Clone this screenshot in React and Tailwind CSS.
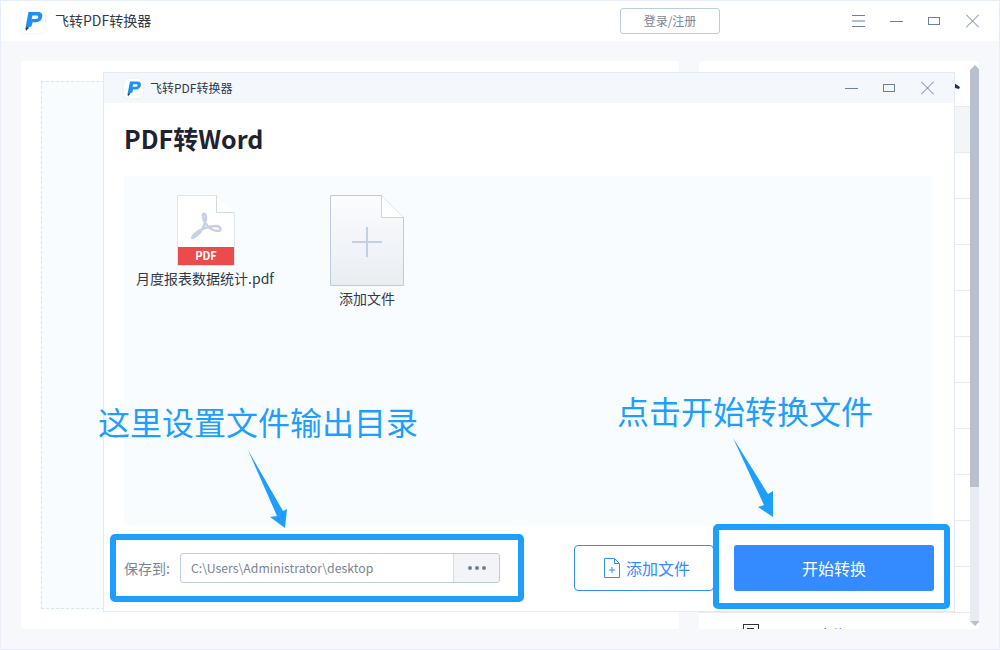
const font = { fontFamily: '"Noto Sans CJK SC", "Noto Sans", sans-serif' }

function Logo({ size }) {
  return (
    <div className="flex items-center justify-center rounded-[5px] bg-white shadow-[0_0_3px_#e3e9f2]" style={{ width: size, height: size }}>
      <svg viewBox="0 0 24 24" style={{ width: size, height: size }}>
        <path d="M7.500 3h9.500c3 0 4.800 2 4.300 4.800-.5 3.200-3 5.400-6.300 5.400h-3.500l-1 4-4.500 1.800-1.500-.5z" fill="#1c90f5" />
        <path d="M11.500 6.500h4c1.300 0 2 .7 1.800 1.700-.2 1-1.100 1.700-2.400 1.700h-4.300z" fill="#fff" />
        <path d="M4.500 18.800l3-.8-.3 2-1.300.6-.4 1.400-.8-1.300z" fill="#2b3140" />
      </svg>
    </div>
  )
}

function WinControls({ menu }) {
  return (
    <div className="flex items-center">
      {menu && (
        <svg width="13" height="14" viewBox="0 0 13 14" className="mr-[25px]" stroke="#6f7f9f" fill="none">
          <path d="M0 1.500h13M0 7h13M0 12.500h13" />
        </svg>
      )}
      <svg width="13" height="14" viewBox="0 0 13 14" className="mr-[25px]" stroke="#6f7f9f" fill="none">
        <path d="M0 7.500h13" />
      </svg>
      <svg width="12" height="14" viewBox="0 0 12 14" className="mr-[26px]" stroke="#6f7f9f" fill="none">
        <rect x=".5" y="3.500" width="11" height="7" />
      </svg>
      <svg width="13" height="14" viewBox="0 0 13 14" stroke="#6f7f9f" fill="none">
        <path d="M0 .5l13 13M13 .5L0 13.500" />
      </svg>
    </div>
  )
}

function Arrow({ className, width, height, d }) {
  return (
    <svg viewBox={`0 0 ${width} ${height}`} className={`absolute ${className}`} style={{ width, height }}>
      <path d={d} fill="#1e9fff" />
    </svg>
  )
}

export default function App() {
  const rows = [0, 1, 2, 3, 4, 5, 6, 7, 8, 9]

  return (
    <div className="relative flex h-[650px] w-[1000px] flex-col overflow-hidden bg-[#f6f8fb]" style={font}>
      {/* Main title bar */}
      <div className="flex h-[41px] items-center bg-white pl-[21px] pr-[21px]">
        <Logo size={24} />
        <span className="ml-[10px] text-[14px] text-[#333a4a]">飞转PDF转换器</span>
        <button className="ml-auto mr-[132px] flex h-[26px] w-[100px] items-center justify-center rounded-[3px] border border-[#bccbdd] text-[12px] text-[#7b8494]">
          登录/注册
        </button>
        <WinControls menu />
      </div>

      {/* Background panels */}
      <div className="flex gap-5 px-[21px] pt-5">
        <div className="h-[568px] w-[658px] rounded-[3px] bg-white pl-5 pt-5">
          <div className="h-[528px] w-[300px] border border-dashed border-[#cfe6f3] bg-[#f9fcfe]" />
        </div>
        <div className="relative h-[568px] w-[280px] overflow-hidden rounded-[3px] bg-white">
          <div className="mt-[45px] h-[47px] border-y border-[#e6ebf3] bg-[#f3f5f6]" />
          {rows.map((r) => (
            <div key={r} className="h-[46px] border-b border-[#e6ebf3]" />
          ))}
          <svg width="6" height="6" viewBox="0 0 6 6" className="absolute left-[255px] top-[22px]">
            <path d="M0 0l6 4-1 2-4-1z" fill="#2b3140" />
          </svg>
          <div className="absolute left-[44px] top-[563px] h-[16px] w-[16px] border border-[#333]">
            <div className="ml-[3px] mt-[3px] h-px w-[7px] bg-[#333]" />
          </div>
          <span className="absolute left-[120px] top-[564px] text-[13px] leading-[18px] text-[#333a4a]">文件</span>
          {/* Scrollbar */}
          <div className="absolute bottom-[3px] right-0 top-[4px] flex w-[9px] flex-col items-center">
            <div className="h-0 w-0 border-x-[5px] border-b-[5px] border-x-transparent border-b-[#b8bfcd]" />
            <div className="h-[417px] w-full bg-[#b8bfcd]" />
            <div className="w-full flex-1 bg-[#e9ebf3]" />
            <div className="h-0 w-0 border-x-[5px] border-t-[5px] border-x-transparent border-t-[#b8bfcd]" />
          </div>
        </div>
      </div>

      {/* Dialog */}
      <div className="absolute left-[103px] top-[72px] flex h-[540px] w-[852px] flex-col border border-[#e3eaf4] bg-white">
        <div className="flex h-[30px] items-center bg-[#f4f8fd] pl-[20px] pr-[20px]">
          <Logo size={19} />
          <span className="ml-[7px] text-[12px] text-[#333a4a]">飞转PDF转换器</span>
          <div className="ml-auto">
            <WinControls />
          </div>
        </div>
        <h1 className="ml-[20px] mt-[18px] text-[25px] font-bold leading-[34px] text-[#1e2233]">PDF转Word</h1>
        <div className="ml-[20px] mt-[21px] flex h-[349px] w-[809px] items-start rounded-[3px] bg-[#f9fcfe] pt-[19px]">
          <div className="ml-[7px] flex w-[148px] flex-col items-center">
            <svg width="58" height="71" viewBox="0 0 58 71" className="ml-[2px]">
              <path d="M.5.500h39l18 18v52H.5z" fill="#fff" stroke="#dde5ef" />
              <path d="M39.500.500v17h18" fill="#fff" stroke="#cfdae8" />
              <path d="M17 42c7-3 11-12 12-18 .5-6-4-7-3-2 1 6 7 14 15 14 4 0 3-5-2-5-7 0-16 3-21 8-4 4-3 5-1 3z" fill="none" stroke="#c5d2e2" strokeWidth="2.500" />
              <rect x="1" y="52" width="56" height="18" fill="#ec4b4b" />
              <text x="29" y="65" textAnchor="middle" fontSize="11" fontWeight="700" fill="#fff">PDF</text>
            </svg>
            <span className="mt-[2px] whitespace-nowrap text-[14px] leading-[20px] text-[#333a4a]">月度报表数据统计.pdf</span>
          </div>
          <div className="ml-[51px] flex w-[74px] flex-col items-center">
            <svg width="74" height="91" viewBox="0 0 74 91">
              <defs>
                <linearGradient id="sheet" x1="0" y1="0" x2="0" y2="1">
                  <stop offset="0" stopColor="#fbfcfe" />
                  <stop offset="1" stopColor="#e9edf3" />
                </linearGradient>
              </defs>
              <path d="M.5.500h51l22 22v68H.5z" fill="url(#sheet)" stroke="#bccbdd" />
              <path d="M51.500.500v22h22" fill="#fff" stroke="#c7d5e5" />
              <path d="M37 32v30M22 47h30" stroke="#c3d0e0" strokeWidth="2" />
            </svg>
            <span className="mt-[2px] whitespace-nowrap text-[14px] leading-[20px] text-[#333a4a]">添加文件</span>
          </div>
        </div>

        {/* Footer */}
        <div className="flex flex-1 items-center pb-[5px] pl-[20px] pt-[5px]">
          <span className="w-[48px] whitespace-nowrap text-[14px] text-[#7b8494]">保存到:</span>
          <div className="ml-[8px] flex h-[30px] w-[320px] items-center rounded-[3px] border border-[#bccbdd]">
            <span className="flex-1 pl-[10px] text-[12.3px] text-[#7b8494]">C:\Users\Administrator\desktop</span>
            <div className="flex h-full w-[46px] items-center justify-center gap-[3px] rounded-r-[3px] border-l border-[#d3dbe6] bg-[#f2f4f8]">
              <i className="h-[4px] w-[4px] rounded-full bg-[#727c90]" />
              <i className="h-[4px] w-[4px] rounded-full bg-[#727c90]" />
              <i className="h-[4px] w-[4px] rounded-full bg-[#727c90]" />
            </div>
          </div>
          <button className="ml-[74px] flex h-[46px] w-[140px] items-center rounded-[4px] border border-[#338bff] pl-[28px] text-[16px] text-[#338bff]">
            <svg width="18" height="20" viewBox="0 0 18 20" className="mr-[5px]" fill="none" stroke="#338bff">
              <path d="M1.500.500h10l5 5v14h-15zM11.500.500v5h5M6 12h6M9 9v6" />
            </svg>
            添加文件
          </button>
          <button className="ml-[20px] flex h-[46px] w-[200px] items-center justify-center rounded-[3px] bg-[#338bff] text-[16px] text-white">
            开始转换
          </button>
        </div>
      </div>

      {/* Annotations over the dialog */}
      <div className="absolute left-[98px] top-[398px] text-[32px] leading-[46px] text-[#1e9fff]">这里设置文件输出目录</div>
      <div className="absolute left-[617px] top-[387px] text-[32px] leading-[46px] text-[#1e9fff]">点击开始转换文件</div>
      <Arrow className="left-[247px] top-[449px]" width={41} height={80} d="M1 1L36 62L40 60L38 79L23 68L30 67Z" />
      <Arrow className="left-[732px] top-[438px]" width={42} height={80} d="M1 0L36 56L41 53L41 79L26 69L32 67Z" />
      <div className="absolute left-[110px] top-[534px] h-[68px] w-[414px] rounded-[5px] border-[6px] border-[#1e9fff]" />
      <div className="absolute left-[713px] top-[524px] h-[85px] w-[237px] rounded-[5px] border-[6px] border-[#1e9fff]" />
      {/* window edge */}
      <div className="pointer-events-none absolute inset-0 border border-[#e8eef7]" />
    </div>
  )
}
